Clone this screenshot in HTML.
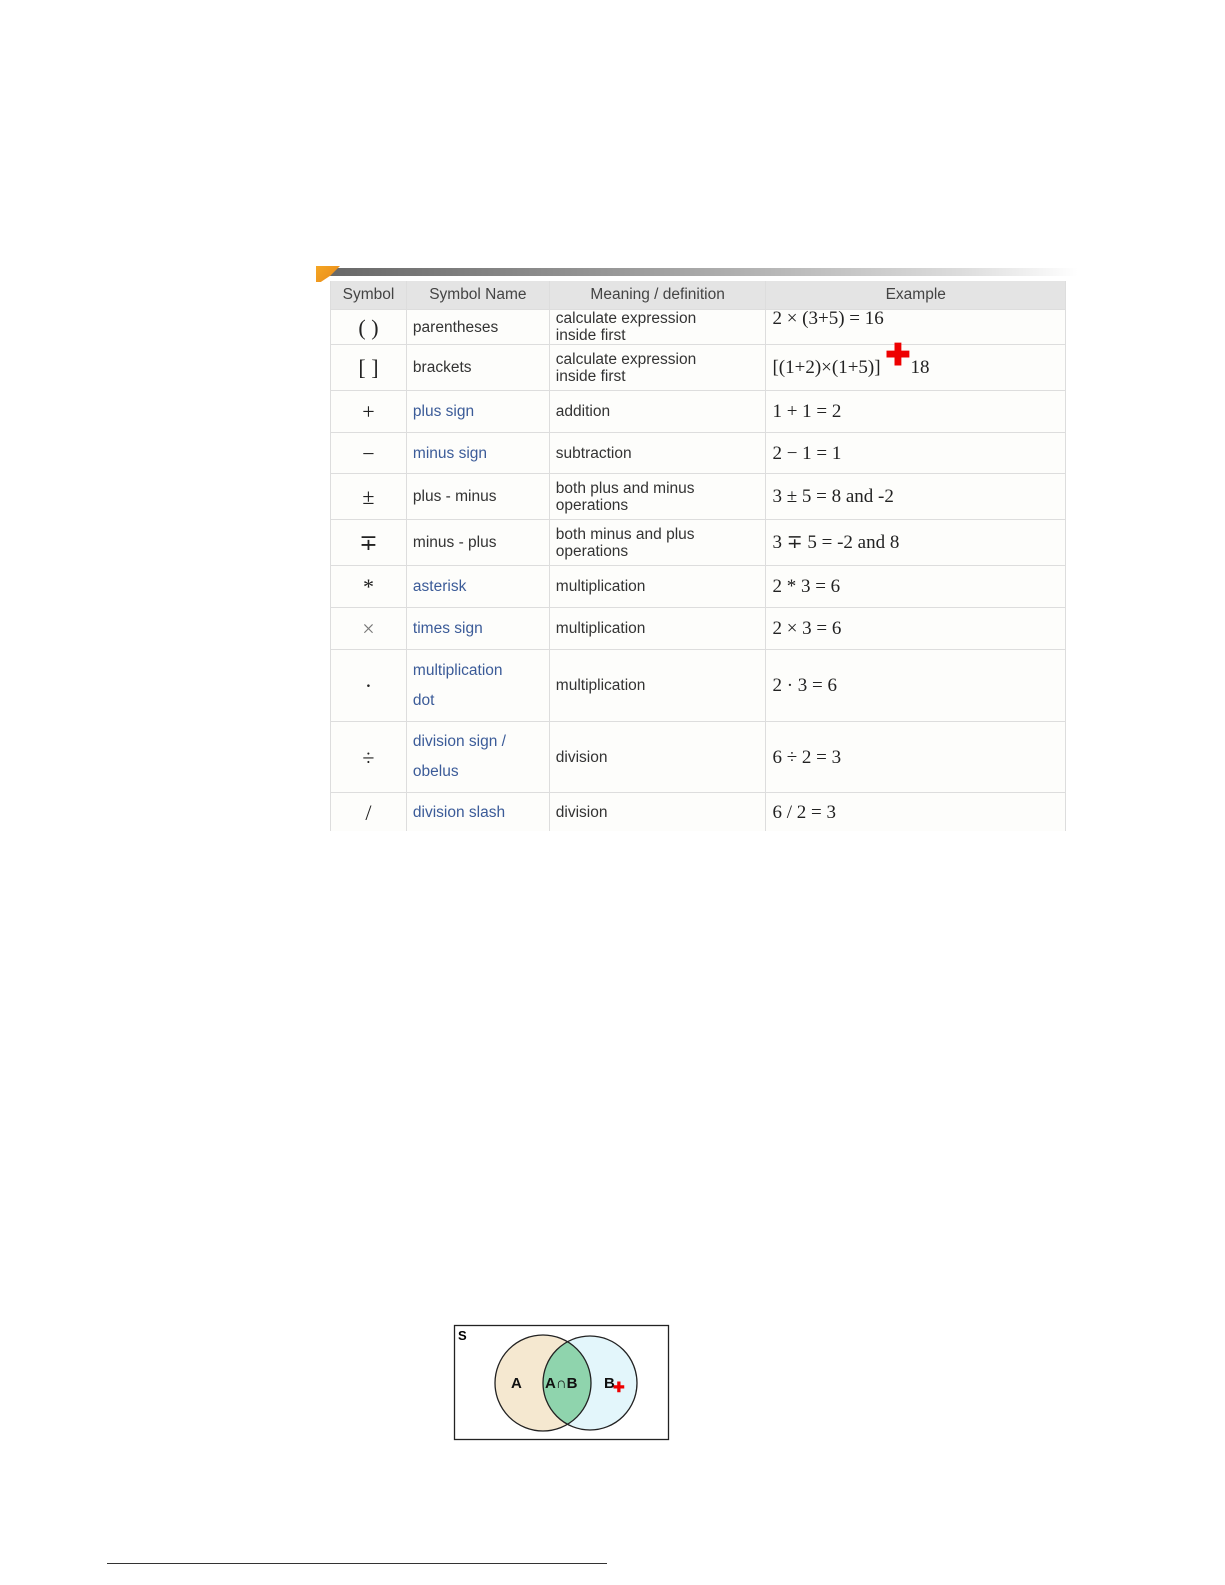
<!DOCTYPE html>
<html><head><meta charset="utf-8"><style>
body{margin:0;width:1225px;height:1585px;background:#fff;position:relative;overflow:hidden;font-family:"Liberation Sans",sans-serif}
.bar{position:absolute;left:318px;top:268px;width:760px;height:8px;background:linear-gradient(to right,#666,#999 40%,#ddd 85%,#fff)}
.or{position:absolute;left:316px;top:266px;width:24px;height:16px;background:linear-gradient(135deg,#f5a623,#e8891a);clip-path:polygon(0 0,100% 0,60% 60%,20% 100%,0 100%)}
table{position:absolute;left:330px;top:281px;border-collapse:collapse;width:736px;font-size:15.5px;color:#333}
td{border:1px solid #ddd;padding:0 6px;vertical-align:middle;line-height:17px;background:#fdfdfb}
th{background:#e4e4e4;font-weight:normal;height:28px;border:1px solid #ddd;border-top:none;color:#444;font-size:15.5px;padding:0}
td.s{text-align:center;font-family:"Liberation Serif",serif;font-size:22px;color:#222}
td.e{font-family:"Liberation Serif",serif;font-size:19px;color:#222}
.l{color:#3b5b98}
.l2{line-height:30px}
</style></head><body>
<div class="bar"></div><div class="or"></div>
<table>
<colgroup><col style="width:76px"><col style="width:143px"><col style="width:217px"><col style="width:300px"></colgroup>
<tr><th>Symbol</th><th>Symbol Name</th><th>Meaning / definition</th><th>Example</th></tr>
<tr style="height:34px"><td class="s">( )</td><td>parentheses</td><td style="vertical-align:top;padding-top:0">calculate expression<br>inside first</td><td class="e" style="vertical-align:top">2 × (3+5) = 16</td></tr>
<tr style="height:46px"><td class="s">[ ]</td><td>brackets</td><td>calculate expression<br>inside first</td><td class="e">[(1+2)×(1+5)] <span style="color:#e00;font-family:'Liberation Sans';font-weight:bold;font-size:30px;position:relative;top:-8px;line-height:10px">✚</span>18</td></tr>
<tr style="height:42px"><td class="s">+</td><td class="l">plus sign</td><td>addition</td><td class="e">1 + 1 = 2</td></tr>
<tr style="height:41px"><td class="s">−</td><td class="l">minus sign</td><td>subtraction</td><td class="e">2 − 1 = 1</td></tr>
<tr style="height:46px"><td class="s">±</td><td>plus - minus</td><td>both plus and minus<br>operations</td><td class="e">3 ± 5 = 8 and -2</td></tr>
<tr style="height:46px"><td class="s">∓</td><td>minus - plus</td><td>both minus and plus<br>operations</td><td class="e">3 ∓ 5 = -2 and 8</td></tr>
<tr style="height:42px"><td class="s">*</td><td class="l">asterisk</td><td>multiplication</td><td class="e">2 * 3 = 6</td></tr>
<tr style="height:42px"><td class="s" style="color:#777">×</td><td class="l">times sign</td><td>multiplication</td><td class="e">2 × 3 = 6</td></tr>
<tr style="height:72px"><td class="s">·</td><td class="l l2">multiplication<br>dot</td><td>multiplication</td><td class="e">2 · 3 = 6</td></tr>
<tr style="height:71px"><td class="s">÷</td><td class="l l2">division sign /<br>obelus</td><td>division</td><td class="e">6 ÷ 2 = 3</td></tr>
<tr style="height:39px"><td class="s">/</td><td class="l">division slash</td><td>division</td><td class="e">6 / 2 = 3</td></tr>
</table>
<div style="position:absolute;left:0;top:831px;width:1225px;height:20px;background:#fff"></div>
<svg style="position:absolute;left:0;top:0" width="1225" height="1585">
<rect x="454.5" y="1325.5" width="214" height="114" fill="#fff" stroke="#222" stroke-width="1.3"/>
<text x="458" y="1340" font-family="Liberation Sans" font-size="13" font-weight="bold">S</text>
<circle cx="543" cy="1383" r="48" fill="#f5e8d0"/>
<circle cx="590" cy="1383" r="47" fill="#e3f6fb"/>
<clipPath id="c"><circle cx="543" cy="1383" r="48"/></clipPath>
<circle cx="590" cy="1383" r="47" fill="#8fd4ad" clip-path="url(#c)"/>
<circle cx="543" cy="1383" r="48" fill="none" stroke="#222" stroke-width="1.3"/>
<circle cx="590" cy="1383" r="47" fill="none" stroke="#222" stroke-width="1.3"/>
<g font-family="Liberation Sans" font-size="15" font-weight="bold" fill="#111">
<text x="511" y="1388">A</text><text x="545" y="1388">A∩B</text><text x="604" y="1388">B</text></g>
<text x="613" y="1392" font-family="Liberation Sans" font-size="14" font-weight="bold" fill="#e00">✚</text>
<line x1="107" y1="1563.5" x2="607" y2="1563.5" stroke="#333" stroke-width="1"/>
</svg>
</body></html>
